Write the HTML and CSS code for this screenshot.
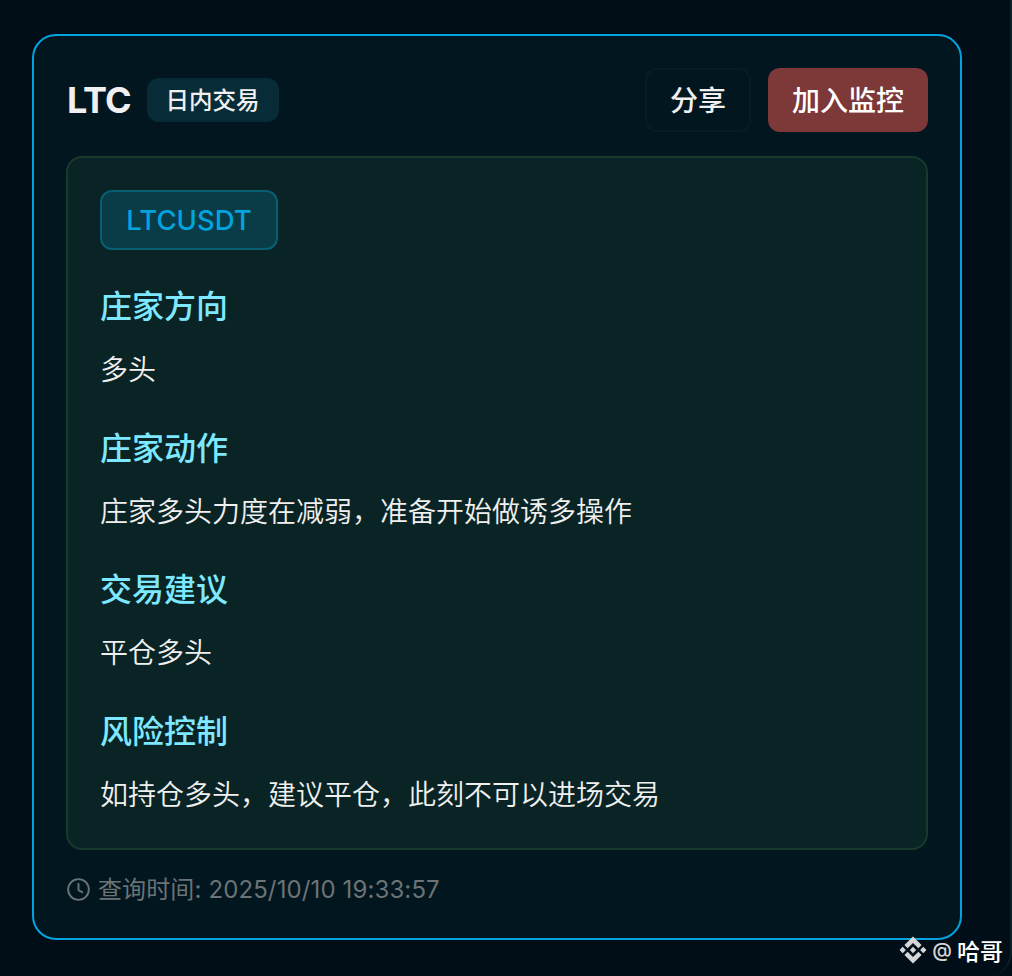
FILE: index.html
```
<!DOCTYPE html>
<html lang="zh-CN">
<head>
   <meta charset="UTF-8">
   <title>LTC 日内交易</title>
   <meta name="viewport" content="width=device-width, initial-scale=1.0">
   <link rel="stylesheet" href="styles.css">
</head>
<body>
   <div class="panel">
      <div class="card">
         <div class="card-header">
            <h1>LTC</h1>
            <span class="badge">日内交易</span>
            <div class="actions">
               <button class="btn btn-share">分享</button>
               <button class="btn btn-monitor">加入监控</button>
            </div>
         </div>
         <div class="analysis">
            <span class="symbol">LTCUSDT</span>
            <section>
               <h2>庄家方向</h2>
               <p>多头</p>
            </section>
            <section>
               <h2>庄家动作</h2>
               <p>庄家多头力度在减弱，准备开始做诱多操作</p>
            </section>
            <section>
               <h2>交易建议</h2>
               <p>平仓多头</p>
            </section>
            <section>
               <h2>风险控制</h2>
               <p>如持仓多头，建议平仓，此刻不可以进场交易</p>
            </section>
         </div>
         <div class="card-footer">
            <svg class="clock" viewBox="0 0 24 24" fill="none" stroke="currentColor" stroke-width="2" stroke-linecap="round" stroke-linejoin="round">
               <circle cx="12" cy="12" r="10.8"/>
               <path d="M12 6v6.8l3.8 2"/>
            </svg>
            <span>查询时间: 2025/10/10 19:33:57</span>
         </div>
      </div>
   </div>
   <div class="watermark">
      <svg class="logo" viewBox="0 0 28 28" fill="currentColor">
         <path d="M14 0.5l8.6 8.6-3.2 3.2L14 6.9l-5.4 5.4-3.2-3.2z"/>
         <path d="M14 27.5l8.6-8.6-3.2-3.2L14 21.1l-5.4-5.4-3.2 3.2z"/>
         <path d="M3.7 10.8L6.9 14l-3.2 3.2L0.5 14z"/>
         <path d="M24.3 10.8l3.2 3.2-3.2 3.2-3.2-3.2z"/>
         <path d="M14 10.8l3.2 3.2-3.2 3.2-3.2-3.2z"/>
      </svg>
      <span class="at">@</span>
      <span>哈哥</span>
   </div>
</body>
</html>
```

FILE: styles.css
```
* {
   box-sizing: border-box;
}
body {
   margin: 0;
   height: 976px;
   overflow: hidden;
   position: relative;
   background-color: #010d17;
   color: #f0f0f0;
   font-family: Inter, "Noto Sans CJK SC", sans-serif;
}
.panel {
   height: 976px;
   padding: 34px 48px 0 32px;
   border-right: 2px solid #0b2329;
   border-bottom-right-radius: 24px;
}
.card {
   height: 906px;
   padding: 32px;
   border: 2px solid #02a3df;
   border-radius: 24px;
   background-color: #021620;
}
.card-header {
   display: flex;
   align-items: center;
   height: 64px;
   margin-bottom: 24px;
}
h1 {
   margin: 0 16px 0 1px;
   font-size: 36px;
   font-weight: 700;
   line-height: 44px;
   letter-spacing: -1px;
}
.badge {
   width: 132px;
   height: 44px;
   border-radius: 12px;
   background-color: #072c38;
   font-size: 23.5px;
   font-weight: 500;
   line-height: 46px;
   text-align: center;
}
.actions {
   display: flex;
   gap: 17px;
   margin-left: auto;
}
.btn {
   height: 64px;
   padding: 2px 24px 0;
   border: none;
   border-radius: 12px;
   font-family: inherit;
   font-size: 28px;
   font-weight: 500;
   line-height: 62px;
   color: #f0f0f0;
}
.btn-share {
   padding: 2px 23px 0;
   border: 2px solid #041d26;
   background-color: transparent;
   line-height: 58px;
}
.btn-monitor {
   background-color: #7d3838;
   color: #fff;
}
.analysis {
   height: 694px;
   padding: 32px;
   border: 2px solid #173a2c;
   border-radius: 16px;
   background-color: #0a2425;
}
.symbol {
   display: block;
   width: 178px;
   height: 60px;
   margin-bottom: 37px;
   border: 2px solid #075e75;
   border-radius: 12px;
   background-color: #0a3c48;
   color: #02a3df;
   font-size: 27.5px;
   font-weight: 500;
   line-height: 57px;
   text-align: center;
}
section {
   margin-bottom: 36.6px;
}
h2 {
   margin: 0 0 21px;
   color: #7de8ff;
   font-size: 32px;
   font-weight: 500;
   line-height: 40px;
}
p {
   margin: 0;
   font-size: 28px;
   font-weight: 350;
   line-height: 44px;
}
.card-footer {
   display: flex;
   align-items: center;
   gap: 8px;
   height: 40px;
   margin-top: 20px;
   padding-left: 1px;
   color: #6b7375;
   font-size: 24px;
   line-height: 36px;
   letter-spacing: 0.12px;
}
.clock {
   width: 23px;
   height: 23px;
   margin-bottom: 1px;
}
.watermark {
   position: absolute;
   right: 9px;
   bottom: 8px;
   display: flex;
   align-items: center;
   height: 36px;
   color: #fff;
   font-size: 23px;
   font-weight: 500;
}
.logo {
   width: 28px;
   height: 28px;
   margin-right: 5px;
   color: #d6d6d6;
}
.at {
   margin-right: 5px;
   color: #d6d6d6;
   font-size: 20px;
   font-weight: 500;
}
```
